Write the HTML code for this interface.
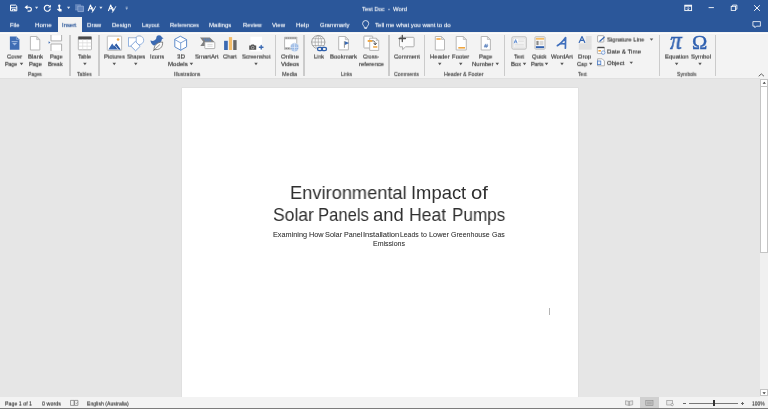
<!DOCTYPE html>
<html><head><meta charset="utf-8"><title>Test Doc - Word</title>
<style>
html,body{margin:0;padding:0;}
body{width:768px;height:409px;overflow:hidden;position:relative;background:#e6e6e6;font-family:"Liberation Sans",sans-serif;}
.abs{position:absolute;}
.t{position:absolute;white-space:nowrap;line-height:1;transform-origin:0 0;text-shadow:0 0.4px 0.5px currentColor;will-change:transform;}
.sep{position:absolute;width:1.3px;background:#cbcbcb;top:34.6px;height:41.2px;}
.arr{position:absolute;width:0;height:0;border-left:1.7px solid transparent;border-right:1.7px solid transparent;border-top:2px solid #5a5a5a;}
svg{position:absolute;overflow:visible;}
</style></head><body>

<div class="abs" style="left:0;top:0;width:768px;height:32.45px;background:#2b579a;"></div>
<div class="abs" style="left:0;top:32.45px;width:768px;height:45.4px;background:#f3f3f3;"></div>
<div class="abs" style="left:0;top:77.5px;width:768px;height:0.6px;background:#e0e0e0;"></div>
<div class="abs" style="left:0;top:32.9px;width:57px;height:1px;background:#fbfbfb;"></div>
<div class="abs" style="left:82.4px;top:32.9px;width:686px;height:1px;background:#fbfbfb;"></div>
<div class="abs" style="left:57.75px;top:17.3px;width:24.25px;height:16px;background:#f3f3f3;"></div>
<div class="t" style="left:361.77px;top:7.00px;font-size:5.9px;color:rgba(255,255,255,0.86);text-shadow:0 1px 0 rgba(255,255,255,0.25),0 -1px 0 rgba(255,255,255,0.25),0 0 0.5px rgba(255,255,255,0.25);transform:scaleX(0.9794);">Test Doc</div>
<div class="t" style="left:387.95px;top:7.00px;font-size:5.9px;color:rgba(255,255,255,0.86);text-shadow:0 1px 0 rgba(255,255,255,0.25),0 -1px 0 rgba(255,255,255,0.25),0 0 0.5px rgba(255,255,255,0.25);transform:scaleX(0.9685);">-</div>
<div class="t" style="left:393.38px;top:7.00px;font-size:5.9px;color:rgba(255,255,255,0.86);text-shadow:0 1px 0 rgba(255,255,255,0.25),0 -1px 0 rgba(255,255,255,0.25),0 0 0.5px rgba(255,255,255,0.25);transform:scaleX(1.0083);">Word</div>
<div class="t" style="left:9.61px;top:23.00px;font-size:5.9px;color:rgba(255,255,255,0.86);text-shadow:0 1px 0 rgba(255,255,255,0.25),0 -1px 0 rgba(255,255,255,0.25),0 0 0.5px rgba(255,255,255,0.25);transform:scaleX(1.0044);">File</div>
<div class="t" style="left:34.88px;top:23.00px;font-size:5.9px;color:rgba(255,255,255,0.86);text-shadow:0 1px 0 rgba(255,255,255,0.25),0 -1px 0 rgba(255,255,255,0.25),0 0 0.5px rgba(255,255,255,0.25);transform:scaleX(1.0672);">Home</div>
<div class="t" style="left:62.27px;top:23.00px;font-size:5.9px;color:rgba(43,87,154,0.86);text-shadow:0 1px 0 rgba(43,87,154,0.25),0 -1px 0 rgba(43,87,154,0.25),0 0 0.5px rgba(43,87,154,0.6);transform:scaleX(0.9738);">Insert</div>
<div class="t" style="left:87.10px;top:23.00px;font-size:5.9px;color:rgba(255,255,255,0.86);text-shadow:0 1px 0 rgba(255,255,255,0.25),0 -1px 0 rgba(255,255,255,0.25),0 0 0.5px rgba(255,255,255,0.25);transform:scaleX(1.0377);">Draw</div>
<div class="t" style="left:112.10px;top:23.00px;font-size:5.9px;color:rgba(255,255,255,0.86);text-shadow:0 1px 0 rgba(255,255,255,0.25),0 -1px 0 rgba(255,255,255,0.25),0 0 0.5px rgba(255,255,255,0.25);transform:scaleX(1.0283);">Design</div>
<div class="t" style="left:141.63px;top:23.00px;font-size:5.9px;color:rgba(255,255,255,0.86);text-shadow:0 1px 0 rgba(255,255,255,0.25),0 -1px 0 rgba(255,255,255,0.25),0 0 0.5px rgba(255,255,255,0.25);transform:scaleX(0.9772);">Layout</div>
<div class="t" style="left:169.94px;top:23.00px;font-size:5.9px;color:rgba(255,255,255,0.86);text-shadow:0 1px 0 rgba(255,255,255,0.25),0 -1px 0 rgba(255,255,255,0.25),0 0 0.5px rgba(255,255,255,0.25);transform:scaleX(0.9567);">References</div>
<div class="t" style="left:209.40px;top:23.00px;font-size:5.9px;color:rgba(255,255,255,0.86);text-shadow:0 1px 0 rgba(255,255,255,0.25),0 -1px 0 rgba(255,255,255,0.25),0 0 0.5px rgba(255,255,255,0.25);transform:scaleX(1.0360);">Mailings</div>
<div class="t" style="left:242.63px;top:23.00px;font-size:5.9px;color:rgba(255,255,255,0.86);text-shadow:0 1px 0 rgba(255,255,255,0.25),0 -1px 0 rgba(255,255,255,0.25),0 0 0.5px rgba(255,255,255,0.25);transform:scaleX(0.9693);">Review</div>
<div class="t" style="left:272.28px;top:23.00px;font-size:5.9px;color:rgba(255,255,255,0.86);text-shadow:0 1px 0 rgba(255,255,255,0.25),0 -1px 0 rgba(255,255,255,0.25),0 0 0.5px rgba(255,255,255,0.25);transform:scaleX(1.0337);">View</div>
<div class="t" style="left:295.88px;top:23.00px;font-size:5.9px;color:rgba(255,255,255,0.86);text-shadow:0 1px 0 rgba(255,255,255,0.25),0 -1px 0 rgba(255,255,255,0.25),0 0 0.5px rgba(255,255,255,0.25);transform:scaleX(1.0692);">Help</div>
<div class="t" style="left:319.60px;top:23.00px;font-size:5.9px;color:rgba(255,255,255,0.86);text-shadow:0 1px 0 rgba(255,255,255,0.25),0 -1px 0 rgba(255,255,255,0.25),0 0 0.5px rgba(255,255,255,0.25);transform:scaleX(1.0117);">Grammarly</div>
<div class="t" style="left:375.26px;top:23.00px;font-size:5.9px;color:rgba(255,255,255,0.86);text-shadow:0 1px 0 rgba(255,255,255,0.25),0 -1px 0 rgba(255,255,255,0.25),0 0 0.5px rgba(255,255,255,0.25);transform:scaleX(1.0423);">Tell me what you want to do</div>
<div class="t" style="left:6.82px;top:53.00px;font-size:6.0px;color:rgba(68,68,68,0.85);text-shadow:0 1px 0 rgba(68,68,68,0.85);transform:scaleX(0.9484);">Cover</div>
<div class="t" style="left:5.18px;top:61.00px;font-size:6.0px;color:rgba(68,68,68,0.86);text-shadow:0 1px 0 rgba(68,68,68,0.25),0 -1px 0 rgba(68,68,68,0.25),0 0 0.5px rgba(68,68,68,0.6);transform:scaleX(0.8526);">Page</div>
<div class="t" style="left:27.82px;top:53.00px;font-size:6.0px;color:rgba(68,68,68,0.85);text-shadow:0 1px 0 rgba(68,68,68,0.85);transform:scaleX(0.9707);">Blank</div>
<div class="t" style="left:28.65px;top:61.00px;font-size:6.0px;color:rgba(68,68,68,0.86);text-shadow:0 1px 0 rgba(68,68,68,0.25),0 -1px 0 rgba(68,68,68,0.25),0 0 0.5px rgba(68,68,68,0.6);transform:scaleX(0.9054);">Page</div>
<div class="t" style="left:49.66px;top:53.00px;font-size:6.0px;color:rgba(68,68,68,0.85);text-shadow:0 1px 0 rgba(68,68,68,0.85);transform:scaleX(0.8903);">Page</div>
<div class="t" style="left:48.44px;top:61.00px;font-size:6.0px;color:rgba(68,68,68,0.86);text-shadow:0 1px 0 rgba(68,68,68,0.25),0 -1px 0 rgba(68,68,68,0.25),0 0 0.5px rgba(68,68,68,0.6);transform:scaleX(0.9347);">Break</div>
<div class="t" style="left:78.28px;top:53.00px;font-size:6.0px;color:rgba(68,68,68,0.85);text-shadow:0 1px 0 rgba(68,68,68,0.85);transform:scaleX(0.9108);">Table</div>
<div class="t" style="left:103.62px;top:53.00px;font-size:6.0px;color:rgba(68,68,68,0.85);text-shadow:0 1px 0 rgba(68,68,68,0.85);transform:scaleX(0.9683);">Pictures</div>
<div class="t" style="left:126.86px;top:53.00px;font-size:6.0px;color:rgba(68,68,68,0.85);text-shadow:0 1px 0 rgba(68,68,68,0.85);transform:scaleX(0.8960);">Shapes</div>
<div class="t" style="left:149.86px;top:53.00px;font-size:6.0px;color:rgba(68,68,68,0.85);text-shadow:0 1px 0 rgba(68,68,68,0.85);transform:scaleX(0.9726);">Icons</div>
<div class="t" style="left:176.86px;top:53.00px;font-size:6.0px;color:rgba(68,68,68,0.85);text-shadow:0 1px 0 rgba(68,68,68,0.85);transform:scaleX(1.0478);">3D</div>
<div class="t" style="left:167.90px;top:61.00px;font-size:6.0px;color:rgba(68,68,68,0.86);text-shadow:0 1px 0 rgba(68,68,68,0.25),0 -1px 0 rgba(68,68,68,0.25),0 0 0.5px rgba(68,68,68,0.6);transform:scaleX(1.0195);">Models</div>
<div class="t" style="left:195.33px;top:53.00px;font-size:6.0px;color:rgba(68,68,68,0.85);text-shadow:0 1px 0 rgba(68,68,68,0.85);transform:scaleX(0.9975);">SmartArt</div>
<div class="t" style="left:223.12px;top:53.00px;font-size:6.0px;color:rgba(68,68,68,0.85);text-shadow:0 1px 0 rgba(68,68,68,0.85);transform:scaleX(0.9418);">Chart</div>
<div class="t" style="left:241.85px;top:53.00px;font-size:6.0px;color:rgba(68,68,68,0.85);text-shadow:0 1px 0 rgba(68,68,68,0.85);transform:scaleX(0.9420);">Screenshot</div>
<div class="t" style="left:280.81px;top:53.00px;font-size:6.0px;color:rgba(68,68,68,0.85);text-shadow:0 1px 0 rgba(68,68,68,0.85);transform:scaleX(1.0301);">Online</div>
<div class="t" style="left:281.08px;top:61.00px;font-size:6.0px;color:rgba(68,68,68,0.86);text-shadow:0 1px 0 rgba(68,68,68,0.25),0 -1px 0 rgba(68,68,68,0.25),0 0 0.5px rgba(68,68,68,0.6);transform:scaleX(0.9889);">Videos</div>
<div class="t" style="left:313.66px;top:53.00px;font-size:6.0px;color:rgba(68,68,68,0.85);text-shadow:0 1px 0 rgba(68,68,68,0.85);transform:scaleX(0.9027);">Link</div>
<div class="t" style="left:329.91px;top:53.00px;font-size:6.0px;color:rgba(68,68,68,0.85);text-shadow:0 1px 0 rgba(68,68,68,0.85);transform:scaleX(0.9875);">Bookmark</div>
<div class="t" style="left:363.33px;top:53.00px;font-size:6.0px;color:rgba(68,68,68,0.85);text-shadow:0 1px 0 rgba(68,68,68,0.85);transform:scaleX(0.9064);">Cross-</div>
<div class="t" style="left:359.01px;top:61.00px;font-size:6.0px;color:rgba(68,68,68,0.86);text-shadow:0 1px 0 rgba(68,68,68,0.25),0 -1px 0 rgba(68,68,68,0.25),0 0 0.5px rgba(68,68,68,0.6);transform:scaleX(0.9804);">reference</div>
<div class="t" style="left:393.80px;top:53.00px;font-size:6.0px;color:rgba(68,68,68,0.85);text-shadow:0 1px 0 rgba(68,68,68,0.85);transform:scaleX(0.9857);">Comment</div>
<div class="t" style="left:429.61px;top:53.00px;font-size:6.0px;color:rgba(68,68,68,0.85);text-shadow:0 1px 0 rgba(68,68,68,0.85);transform:scaleX(0.9952);">Header</div>
<div class="t" style="left:451.91px;top:53.00px;font-size:6.0px;color:rgba(68,68,68,0.85);text-shadow:0 1px 0 rgba(68,68,68,0.85);transform:scaleX(0.9969);">Footer</div>
<div class="t" style="left:479.14px;top:53.00px;font-size:6.0px;color:rgba(68,68,68,0.85);text-shadow:0 1px 0 rgba(68,68,68,0.85);transform:scaleX(0.9431);">Page</div>
<div class="t" style="left:472.11px;top:61.00px;font-size:6.0px;color:rgba(68,68,68,0.86);text-shadow:0 1px 0 rgba(68,68,68,0.25),0 -1px 0 rgba(68,68,68,0.25),0 0 0.5px rgba(68,68,68,0.6);transform:scaleX(1.0022);">Number</div>
<div class="t" style="left:513.78px;top:53.00px;font-size:6.0px;color:rgba(68,68,68,0.85);text-shadow:0 1px 0 rgba(68,68,68,0.85);transform:scaleX(0.9234);">Text</div>
<div class="t" style="left:510.92px;top:61.00px;font-size:6.0px;color:rgba(68,68,68,0.86);text-shadow:0 1px 0 rgba(68,68,68,0.25),0 -1px 0 rgba(68,68,68,0.25),0 0 0.5px rgba(68,68,68,0.6);transform:scaleX(0.9708);">Box</div>
<div class="t" style="left:532.33px;top:53.00px;font-size:6.0px;color:rgba(68,68,68,0.85);text-shadow:0 1px 0 rgba(68,68,68,0.85);transform:scaleX(0.9492);">Quick</div>
<div class="t" style="left:530.66px;top:61.00px;font-size:6.0px;color:rgba(68,68,68,0.86);text-shadow:0 1px 0 rgba(68,68,68,0.25),0 -1px 0 rgba(68,68,68,0.25),0 0 0.5px rgba(68,68,68,0.6);transform:scaleX(0.8875);">Parts</div>
<div class="t" style="left:551.08px;top:53.00px;font-size:6.0px;color:rgba(68,68,68,0.85);text-shadow:0 1px 0 rgba(68,68,68,0.85);transform:scaleX(0.9987);">WordArt</div>
<div class="t" style="left:578.40px;top:53.00px;font-size:6.0px;color:rgba(68,68,68,0.85);text-shadow:0 1px 0 rgba(68,68,68,0.85);transform:scaleX(1.0192);">Drop</div>
<div class="t" style="left:577.12px;top:61.00px;font-size:6.0px;color:rgba(68,68,68,0.86);text-shadow:0 1px 0 rgba(68,68,68,0.25),0 -1px 0 rgba(68,68,68,0.25),0 0 0.5px rgba(68,68,68,0.6);transform:scaleX(0.9275);">Cap</div>
<div class="t" style="left:664.61px;top:53.00px;font-size:6.0px;color:rgba(68,68,68,0.85);text-shadow:0 1px 0 rgba(68,68,68,0.85);transform:scaleX(0.9995);">Equation</div>
<div class="t" style="left:690.63px;top:53.00px;font-size:6.0px;color:rgba(68,68,68,0.85);text-shadow:0 1px 0 rgba(68,68,68,0.85);transform:scaleX(0.9929);">Symbol</div>
<div class="t" style="left:606.84px;top:36.00px;font-size:6.0px;color:rgba(68,68,68,0.85);text-shadow:0 1px 0 rgba(68,68,68,0.85);transform:scaleX(0.9644);">Signature Line</div>
<div class="t" style="left:606.59px;top:48.00px;font-size:6.0px;color:rgba(68,68,68,0.85);text-shadow:0 1px 0 rgba(68,68,68,0.85);transform:scaleX(1.0324);">Date &amp; Time</div>
<div class="t" style="left:606.82px;top:60.00px;font-size:6.0px;color:rgba(68,68,68,0.86);text-shadow:0 1px 0 rgba(68,68,68,0.25),0 -1px 0 rgba(68,68,68,0.25),0 0 0.5px rgba(68,68,68,0.6);transform:scaleX(0.9991);">Object</div>
<svg style="left:0;top:0" width="768" height="409" viewBox="0 0 768 409">
<path d="M19.75 62.75H23.25L21.50 65.15Z" fill="#585858"/>
<path d="M83.15 62.75H86.65L84.90 65.15Z" fill="#585858"/>
<path d="M112.50 62.75H116.00L114.25 65.15Z" fill="#585858"/>
<path d="M134.00 62.75H137.50L135.75 65.15Z" fill="#585858"/>
<path d="M189.65 62.75H193.15L191.40 65.15Z" fill="#585858"/>
<path d="M254.25 62.75H257.75L256.00 65.15Z" fill="#585858"/>
<path d="M438.00 62.75H441.50L439.75 65.15Z" fill="#585858"/>
<path d="M459.00 62.75H462.50L460.75 65.15Z" fill="#585858"/>
<path d="M495.50 62.75H499.00L497.25 65.15Z" fill="#585858"/>
<path d="M522.75 62.75H526.25L524.50 65.15Z" fill="#585858"/>
<path d="M544.75 62.75H548.25L546.50 65.15Z" fill="#585858"/>
<path d="M560.25 62.75H563.75L562.00 65.15Z" fill="#585858"/>
<path d="M589.00 62.75H592.50L590.75 65.15Z" fill="#585858"/>
<path d="M674.85 62.75H678.35L676.60 65.15Z" fill="#585858"/>
<path d="M698.25 62.75H701.75L700.00 65.15Z" fill="#585858"/>
<path d="M649.75 38.45H653.25L651.50 40.85Z" fill="#585858"/>
<path d="M629.50 61.65H633.00L631.25 64.05Z" fill="#585858"/>
</svg>
<div class="sep" style="left:69.35px;"></div>
<div class="sep" style="left:98.35px;"></div>
<div class="sep" style="left:274.85px;"></div>
<div class="sep" style="left:303.35px;"></div>
<div class="sep" style="left:388.35px;"></div>
<div class="sep" style="left:423.95px;"></div>
<div class="sep" style="left:503.75px;"></div>
<div class="sep" style="left:658.85px;"></div>
<div class="sep" style="left:714.55px;"></div>
<div class="t" style="left:27.70px;top:72.00px;font-size:5.2px;color:rgba(85,85,85,0.86);text-shadow:0 1px 0 rgba(85,85,85,0.25),0 -1px 0 rgba(85,85,85,0.25),0 0 0.5px rgba(85,85,85,0.6);transform:scaleX(0.9414);">Pages</div>
<div class="t" style="left:77.49px;top:72.00px;font-size:5.2px;color:rgba(85,85,85,0.86);text-shadow:0 1px 0 rgba(85,85,85,0.25),0 -1px 0 rgba(85,85,85,0.25),0 0 0.5px rgba(85,85,85,0.6);transform:scaleX(0.9707);">Tables</div>
<div class="t" style="left:174.12px;top:72.00px;font-size:5.2px;color:rgba(85,85,85,0.86);text-shadow:0 1px 0 rgba(85,85,85,0.25),0 -1px 0 rgba(85,85,85,0.25),0 0 0.5px rgba(85,85,85,0.6);transform:scaleX(1.0064);">Illustrations</div>
<div class="t" style="left:281.94px;top:72.00px;font-size:5.2px;color:rgba(85,85,85,0.86);text-shadow:0 1px 0 rgba(85,85,85,0.25),0 -1px 0 rgba(85,85,85,0.25),0 0 0.5px rgba(85,85,85,0.6);transform:scaleX(1.0696);">Media</div>
<div class="t" style="left:340.71px;top:72.00px;font-size:5.2px;color:rgba(85,85,85,0.86);text-shadow:0 1px 0 rgba(85,85,85,0.25),0 -1px 0 rgba(85,85,85,0.25),0 0 0.5px rgba(85,85,85,0.6);transform:scaleX(0.9112);">Links</div>
<div class="t" style="left:394.14px;top:72.00px;font-size:5.2px;color:rgba(85,85,85,0.86);text-shadow:0 1px 0 rgba(85,85,85,0.25),0 -1px 0 rgba(85,85,85,0.25),0 0 0.5px rgba(85,85,85,0.6);transform:scaleX(0.9921);">Comments</div>
<div class="t" style="left:444.46px;top:72.00px;font-size:5.2px;color:rgba(85,85,85,0.86);text-shadow:0 1px 0 rgba(85,85,85,0.25),0 -1px 0 rgba(85,85,85,0.25),0 0 0.5px rgba(85,85,85,0.6);transform:scaleX(1.0334);">Header &amp; Footer</div>
<div class="t" style="left:577.79px;top:72.00px;font-size:5.2px;color:rgba(85,85,85,0.86);text-shadow:0 1px 0 rgba(85,85,85,0.25),0 -1px 0 rgba(85,85,85,0.25),0 0 0.5px rgba(85,85,85,0.6);transform:scaleX(0.9269);">Text</div>
<div class="t" style="left:677.37px;top:72.00px;font-size:5.2px;color:rgba(85,85,85,0.86);text-shadow:0 1px 0 rgba(85,85,85,0.25),0 -1px 0 rgba(85,85,85,0.25),0 0 0.5px rgba(85,85,85,0.6);transform:scaleX(0.9733);">Symbols</div>
<div class="t" style="left:670.48px;top:28.00px;font-size:25.0px;color:#2f60b0;text-shadow:none;transform:scaleX(0.9403);font-family:'Liberation Serif',serif;font-style:italic;-webkit-text-stroke:0.55px #2f60b0;">π</div>
<div class="t" style="left:692.05px;top:33.00px;font-size:19.8px;color:#2f60b0;text-shadow:none;transform:scaleX(1.0400);font-family:'Liberation Serif',serif;-webkit-text-stroke:0.4px #2f60b0;">Ω</div>
<div class="abs" style="left:181.8px;top:87.7px;width:396.3px;height:309.6px;background:#fff;box-shadow:0 0 0 0.5px #dadada;"></div>
<div class="t" style="left:290.40px;top:184.00px;font-size:18.4px;color:#303030;text-shadow:none;transform:scaleX(0.9923);">Environmental</div>
<div class="t" style="left:411.21px;top:184.00px;font-size:18.4px;color:#303030;text-shadow:none;transform:scaleX(0.9963);">Impact</div>
<div class="t" style="left:471.15px;top:184.00px;font-size:18.4px;color:#303030;text-shadow:none;transform:scaleX(1.1020);">of</div>
<div class="t" style="left:272.51px;top:206.00px;font-size:18.4px;color:#303030;text-shadow:none;transform:scaleX(0.9540);">Solar</div>
<div class="t" style="left:318.04px;top:206.00px;font-size:18.4px;color:#303030;text-shadow:none;transform:scaleX(0.9039);">Panels</div>
<div class="t" style="left:373.43px;top:206.00px;font-size:18.4px;color:#303030;text-shadow:none;transform:scaleX(0.9986);">and</div>
<div class="t" style="left:408.76px;top:206.00px;font-size:18.4px;color:#303030;text-shadow:none;transform:scaleX(0.9564);">Heat</div>
<div class="t" style="left:451.79px;top:206.00px;font-size:18.4px;color:#303030;text-shadow:none;transform:scaleX(0.9312);">Pumps</div>
<div class="t" style="left:273.40px;top:232.00px;font-size:6.6px;color:rgba(51,51,51,0.85);text-shadow:0 1px 0 rgba(51,51,51,0.85);transform:scaleX(1.1055);text-shadow:0 0 0.5px rgba(51,51,51,0.5);">Examining</div>
<div class="t" style="left:308.50px;top:232.00px;font-size:6.6px;color:rgba(51,51,51,0.85);text-shadow:0 1px 0 rgba(51,51,51,0.85);transform:scaleX(1.1042);text-shadow:0 0 0.5px rgba(51,51,51,0.5);">How</div>
<div class="t" style="left:324.87px;top:232.00px;font-size:6.6px;color:rgba(51,51,51,0.85);text-shadow:0 1px 0 rgba(51,51,51,0.85);transform:scaleX(1.1132);text-shadow:0 0 0.5px rgba(51,51,51,0.5);">Solar</div>
<div class="t" style="left:343.61px;top:232.00px;font-size:6.6px;color:rgba(51,51,51,0.85);text-shadow:0 1px 0 rgba(51,51,51,0.85);transform:scaleX(1.0818);text-shadow:0 0 0.5px rgba(51,51,51,0.5);">Panel</div>
<div class="t" style="left:362.70px;top:232.00px;font-size:6.6px;color:rgba(51,51,51,0.85);text-shadow:0 1px 0 rgba(51,51,51,0.85);transform:scaleX(1.1499);text-shadow:0 0 0.5px rgba(51,51,51,0.5);">Installation</div>
<div class="t" style="left:400.34px;top:232.00px;font-size:6.6px;color:rgba(51,51,51,0.85);text-shadow:0 1px 0 rgba(51,51,51,0.85);transform:scaleX(1.0345);text-shadow:0 0 0.5px rgba(51,51,51,0.5);">Leads</div>
<div class="t" style="left:421.40px;top:232.00px;font-size:6.6px;color:rgba(51,51,51,0.85);text-shadow:0 1px 0 rgba(51,51,51,0.85);transform:scaleX(1.0516);text-shadow:0 0 0.5px rgba(51,51,51,0.5);">to</div>
<div class="t" style="left:429.20px;top:232.00px;font-size:6.6px;color:rgba(51,51,51,0.85);text-shadow:0 1px 0 rgba(51,51,51,0.85);transform:scaleX(1.1136);text-shadow:0 0 0.5px rgba(51,51,51,0.5);">Lower</div>
<div class="t" style="left:451.35px;top:232.00px;font-size:6.6px;color:rgba(51,51,51,0.85);text-shadow:0 1px 0 rgba(51,51,51,0.85);transform:scaleX(1.0642);text-shadow:0 0 0.5px rgba(51,51,51,0.5);">Greenhouse</div>
<div class="t" style="left:492.35px;top:232.00px;font-size:6.6px;color:rgba(51,51,51,0.85);text-shadow:0 1px 0 rgba(51,51,51,0.85);transform:scaleX(1.0488);text-shadow:0 0 0.5px rgba(51,51,51,0.5);">Gas</div>
<div class="t" style="left:372.92px;top:241.00px;font-size:6.6px;color:rgba(51,51,51,0.86);text-shadow:0 1px 0 rgba(51,51,51,0.25),0 -1px 0 rgba(51,51,51,0.25),0 0 0.5px rgba(51,51,51,0.6);transform:scaleX(1.0649);text-shadow:0 0 0.5px rgba(51,51,51,0.5);">Emissions</div>
<div class="abs" style="left:549.2px;top:308.1px;width:0.8px;height:7px;background:#b4b4b4;"></div>
<div class="abs" style="left:760.2px;top:78px;width:7.8px;height:319px;background:#f0f0f0;"></div>
<div class="abs" style="left:760.1px;top:78.6px;width:7.6px;height:174.4px;background:#fff;border:0.7px solid #c4c4c4;box-sizing:border-box;"></div>
<div class="abs" style="left:760.1px;top:86.3px;width:7.6px;height:0.7px;background:#c4c4c4;"></div>
<div class="abs" style="left:760.1px;top:389.1px;width:7.6px;height:7.4px;background:#fff;border:0.7px solid #c4c4c4;box-sizing:border-box;"></div>
<div class="abs" style="left:0;top:397.3px;width:768px;height:12px;background:#f3f3f3;"></div>
<div class="abs" style="left:639.8px;top:397.3px;width:19.1px;height:10.5px;background:#d0d0d0;"></div>
<div class="abs" style="left:0;top:407.65px;width:768px;height:1.35px;background:#7c7c7c;"></div>
<div class="t" style="left:5.27px;top:402.00px;font-size:4.9px;color:rgba(68,68,68,0.85);text-shadow:0 1px 0 rgba(68,68,68,0.85);transform:scaleX(1.0808);">Page 1 of 1</div>
<div class="t" style="left:42.29px;top:402.00px;font-size:4.9px;color:rgba(68,68,68,0.85);text-shadow:0 1px 0 rgba(68,68,68,0.85);transform:scaleX(1.1020);">0 words</div>
<div class="t" style="left:86.68px;top:402.00px;font-size:4.9px;color:rgba(68,68,68,0.85);text-shadow:0 1px 0 rgba(68,68,68,0.85);transform:scaleX(1.0499);">English (Australia)</div>
<div class="t" style="left:752.04px;top:402.00px;font-size:4.9px;color:rgba(68,68,68,0.85);text-shadow:0 1px 0 rgba(68,68,68,0.85);transform:scaleX(0.9762);">100%</div>
<div class="abs" style="left:688.9px;top:402.8px;width:49.5px;height:0.8px;background:#777;"></div>
<div class="abs" style="left:712.6px;top:400.2px;width:2.4px;height:5.7px;background:#333;"></div>
<div class="abs" style="left:682.6px;top:402.8px;width:3.2px;height:0.8px;background:#666;"></div>
<div class="abs" style="left:741.2px;top:402.8px;width:3px;height:0.8px;background:#666;"></div>
<div class="abs" style="left:742.3px;top:401.7px;width:0.8px;height:3px;background:#666;"></div>
<svg style="left:0;top:0" width="768" height="409" viewBox="0 0 768 409">
<path d="M10.9 5.1H15.7L16.8 6.2V10.8H10.9Z" fill="none" stroke="#ffffff" stroke-width="1.0" stroke-linejoin="round" stroke-linecap="round" />
<line x1="10.9" y1="7.8" x2="16.8" y2="7.8" stroke="#ffffff" stroke-width="1.0" stroke-linecap="butt"/>
<rect x="12.2" y="9.0" width="3.40" height="1.80" fill="#ffffff" stroke="none" stroke-width="0.9" rx="0" opacity="1"/>
<rect x="13.3" y="9.6" width="0.80" height="1.20" fill="#2b579a" stroke="none" stroke-width="0.9" rx="0" opacity="1"/>
<path d="M26.6 7.2H29.4A1.95 1.95 0 0 1 29.4 11.1H28.0" fill="none" stroke="#ffffff" stroke-width="1.15" stroke-linejoin="round" stroke-linecap="round" />
<path d="M24.5 7.2L27.5 4.9V9.5Z" fill="#ffffff" stroke="none" stroke-width="0.9" stroke-linejoin="round" stroke-linecap="round" />
<path d="M35.0 6.800000000000001H38.2L36.6 9.1Z" fill="#ffffff" opacity="0.85"/>
<path d="M49.2 5.9A3 3 0 1 0 50.2 9.0" fill="none" stroke="#ffffff" stroke-width="1.15" stroke-linejoin="round" stroke-linecap="round" />
<path d="M48.0 7.5H50.9V4.7Z" fill="#ffffff" stroke="none" stroke-width="0.9" stroke-linejoin="round" stroke-linecap="round" />
<circle cx="59.3" cy="5.8" r="1.2" fill="#ffffff" stroke="none" stroke-width="0.9"/>
<path d="M58.7 6.5V9.2L57.4 8.8L57.1 9.6L59.4 11.6H61.6V9.2L59.9 8.6V6.5Z" fill="#ffffff" stroke="none" stroke-width="0.9" stroke-linejoin="round" stroke-linecap="round" />
<path d="M67.0 6.800000000000001H70.19999999999999L68.6 9.1Z" fill="#ffffff" opacity="0.85"/>
<path d="M75.6 4.7H80.6V6.2H83.4V11.6H78.2V10H75.6Z" fill="#6f8fc4" stroke="#9fb6dc" stroke-width="0.5" stroke-linejoin="round" stroke-linecap="round" opacity="0.8"/>
<path d="M78.2 6.2H83.4V11.6H78.2Z" fill="#5f82bb" stroke="#a9bee0" stroke-width="0.5" stroke-linejoin="round" stroke-linecap="round" />
<path d="M88.3 10.6L90.5 5.0L92.6 10.6M89.1 8.8H91.9" fill="none" stroke="#ffffff" stroke-width="1.1" stroke-linejoin="round" stroke-linecap="round" />
<path d="M92.2 7.4L93.6 10.2L95.5 6.6M93.6 10.2L92.2 12.3" fill="none" stroke="#ffffff" stroke-width="0.85" stroke-linejoin="round" stroke-linecap="round" />
<path d="M108.5 10.6L110.7 5.0L112.8 10.6M109.3 8.8H112.10000000000001" fill="none" stroke="#ffffff" stroke-width="1.1" stroke-linejoin="round" stroke-linecap="round" />
<path d="M112.4 7.4L113.8 10.2L115.7 6.6M113.8 10.2L112.4 12.3" fill="none" stroke="#ffffff" stroke-width="0.85" stroke-linejoin="round" stroke-linecap="round" />
<path d="M99.30000000000001 6.800000000000001H102.5L100.9 9.1Z" fill="#ffffff" opacity="0.85"/>
<line x1="125.6" y1="7.2" x2="127.8" y2="7.2" stroke="#ffffff" stroke-width="0.5" stroke-linecap="butt"/>
<path d="M125.5 8.15H127.9L126.7 9.65Z" fill="#ffffff" opacity="0.7"/>
<rect x="684.8" y="5.2" width="6.80" height="5.40" fill="none" stroke="#ffffff" stroke-width="0.9" rx="0" opacity="1"/>
<rect x="684.8" y="5.2" width="6.80" height="1.40" fill="#ffffff" stroke="none" stroke-width="0.9" rx="0" opacity="1"/>
<path d="M688.2 7.4V9.8M687.1 8.7L688.2 9.8L689.3 8.7" fill="none" stroke="#ffffff" stroke-width="0.6" stroke-linejoin="round" stroke-linecap="round" />
<line x1="708.6" y1="7.6" x2="713.9" y2="7.6" stroke="#ffffff" stroke-width="0.9" stroke-linecap="butt"/>
<rect x="731.2" y="6.3" width="4.40" height="4.10" fill="none" stroke="#ffffff" stroke-width="0.8" rx="0" opacity="1"/>
<path d="M732.6 6.3V5.1H736.9V9.2H735.6" fill="none" stroke="#ffffff" stroke-width="0.8" stroke-linejoin="round" stroke-linecap="round" />
<path d="M754.4 5.5L759.6 10.6M759.6 5.5L754.4 10.6" fill="none" stroke="#ffffff" stroke-width="0.95" stroke-linejoin="round" stroke-linecap="round" />
<path d="M753.3 21.6H760.4V26.2H756.4L754.9 27.7V26.2H753.3Z" fill="none" stroke="#ffffff" stroke-width="0.8" stroke-linejoin="round" stroke-linecap="round" />
<path d="M364.4 27.3C364.4 26 362.6 25.4 362.6 23.6A3.05 3.05 0 0 1 368.7 23.6C368.7 25.4 366.9 26 366.9 27.3Z" fill="none" stroke="#ffffff" stroke-width="0.8" stroke-linejoin="round" stroke-linecap="round" />
<line x1="364.5" y1="28.5" x2="366.8" y2="28.5" stroke="#ffffff" stroke-width="0.7" stroke-linecap="butt"/>
<path d="M9.9 36.4H16.4L19.4 39.4V49.8H9.9Z" fill="#3f6db4" stroke="none" stroke-width="0.9" stroke-linejoin="round" stroke-linecap="round" />
<path d="M16.4 36.4V39.4H19.4" fill="none" stroke="#9db8e2" stroke-width="0.6" stroke-linejoin="round" stroke-linecap="round" />
<rect x="11.6" y="41.3" width="6.00" height="0.80" fill="#b9cdea" stroke="none" stroke-width="0.9" rx="0" opacity="1"/>
<path d="M12.2 43.1H17L14.6 45.6Z" fill="#9db8e2" stroke="none" stroke-width="0.9" stroke-linejoin="round" stroke-linecap="round" />
<path d="M30.4 36.5H36.699999999999996L39.8 39.6V50.0H30.4Z" fill="#ffffff" stroke="#b4b4b4" stroke-width="0.95" stroke-linejoin="round"/>
<path d="M36.699999999999996 36.5V39.6H39.8Z" fill="#e2e2e2" stroke="#b4b4b4" stroke-width="0.6649999999999999" stroke-linejoin="round"/>
<path d="M51.0 35.4V40.9H61.6V35.4" fill="#ffffff" stroke="#a8a8a8" stroke-width="0.9" stroke-linejoin="round" stroke-linecap="round" />
<path d="M51.0 50.6V44.0H61.6V50.6" fill="#ffffff" stroke="#a8a8a8" stroke-width="0.9" stroke-linejoin="round" stroke-linecap="round" />
<path d="M48.6 41.3L50.4 42.5L48.6 43.7Z" fill="#3a69b2" stroke="none" stroke-width="0.9" stroke-linejoin="round" stroke-linecap="round" />
<rect x="78.3" y="36.6" width="13.20" height="13.20" fill="#ffffff" stroke="#a8a8a8" stroke-width="0.8" rx="0.6" opacity="1"/>
<rect x="78.3" y="36.6" width="13.20" height="2.90" fill="#4a4a4a" stroke="none" stroke-width="0.9" rx="0" opacity="1"/>
<line x1="78.3" y1="42.8" x2="91.5" y2="42.8" stroke="#cfcfcf" stroke-width="0.6" stroke-linecap="butt"/>
<line x1="78.3" y1="46.2" x2="91.5" y2="46.2" stroke="#cfcfcf" stroke-width="0.6" stroke-linecap="butt"/>
<line x1="82.7" y1="39.5" x2="82.7" y2="49.8" stroke="#d6d6d6" stroke-width="0.6" stroke-linecap="butt"/>
<line x1="87.1" y1="39.5" x2="87.1" y2="49.8" stroke="#d6d6d6" stroke-width="0.6" stroke-linecap="butt"/>
<rect x="107.3" y="36.1" width="14.30" height="14.30" fill="#ffffff" stroke="#b4b4b4" stroke-width="0.85" rx="0.5" opacity="1"/>
<circle cx="118.1" cy="39.5" r="1.3" fill="#f0a640" stroke="none" stroke-width="0.9"/>
<path d="M108.4 49.4L112.2 43.6L114.3 46.6L116.2 43.6L120.6 49.4Z" fill="#3a69b2" stroke="none" stroke-width="0.9" stroke-linejoin="round" stroke-linecap="round" />
<path d="M113.6 47.6L116.2 43.6L120.6 49.4H118.2Z" fill="#2d5aa3" stroke="none" stroke-width="0.9" stroke-linejoin="round" stroke-linecap="round" />
<path d="M115.4 46.0L118.4 49.9" fill="none" stroke="#ffffff" stroke-width="0.7" stroke-linejoin="round" stroke-linecap="round" />
<circle cx="139.3" cy="40.2" r="4.4" fill="#ffffff" stroke="#8eafde" stroke-width="0.9"/>
<path d="M136.0 37.3A4.4 4.4 0 0 1 141.8 36.6" fill="none" stroke="#c4c8d0" stroke-width="0.9" stroke-linejoin="round" stroke-linecap="round" />
<rect x="128.5" y="37.7" width="7.70" height="8.50" fill="#ffffff" stroke="#8badde" stroke-width="0.9" rx="0" opacity="1"/>
<line x1="129.6" y1="37.7" x2="135.0" y2="37.7" stroke="#c4c8d0" stroke-width="0.9" stroke-linecap="butt"/>
<path d="M135.6 41.7L140.2 46.25L135.6 50.8L131.0 46.25Z" fill="#ffffff" stroke="#7ca1d8" stroke-width="0.95" stroke-linejoin="round" stroke-linecap="round" />
<path d="M150.5 40.3C152 41.2 153.4 41 154.6 40.3C155.4 39.8 156 39.2 156.3 38.2C156.2 36.6 157.4 35.3 159 35.3C160.5 35.3 161.5 36.2 161.8 37.3L163.6 38.2L161.9 39.1C161.8 40.6 161 42 159.8 43C158.4 44.2 156.4 45.4 153.8 45.6C151.6 44.6 150.5 42.4 150.5 40.3Z" fill="#3a69b2" stroke="none" stroke-width="0.9" stroke-linejoin="round" stroke-linecap="round" />
<path d="M154.2 49.6C153.6 45.6 156.8 42.2 162.6 42C163 47.4 159.8 50.2 154.2 49.6Z" fill="#f8f8f8" stroke="#6d6d6d" stroke-width="0.8" stroke-linejoin="round" stroke-linecap="round" />
<path d="M153.2 50.8L159.6 44.8" fill="none" stroke="#6d6d6d" stroke-width="0.7" stroke-linejoin="round" stroke-linecap="round" />
<path d="M180.7 36.4L186.6 39.6V46.9L180.7 50.2L174.8 46.9V39.6Z" fill="#ffffff" stroke="#5f8ccb" stroke-width="1.0" stroke-linejoin="round" stroke-linecap="round" />
<path d="M174.8 39.6L180.7 42.9L186.6 39.6M180.7 42.9V50.2" fill="none" stroke="#6f97d0" stroke-width="0.9" stroke-linejoin="round" stroke-linecap="round" />
<path d="M200.0 37.4H209.8L214.2 41.7L209.8 46.0H200.3L203.3 41.7Z" fill="#808080" stroke="none" stroke-width="0.9" stroke-linejoin="round" stroke-linecap="round" />
<rect x="203.8" y="38.6" width="1.30" height="1.10" fill="#4f86d6" stroke="none" stroke-width="0.9" rx="0" opacity="1"/>
<rect x="206.0" y="38.6" width="1.30" height="1.10" fill="#4f86d6" stroke="none" stroke-width="0.9" rx="0" opacity="1"/>
<rect x="208.2" y="38.6" width="1.30" height="1.10" fill="#4f86d6" stroke="none" stroke-width="0.9" rx="0" opacity="1"/>
<rect x="205.2" y="40.3" width="1.30" height="1.10" fill="#4f86d6" stroke="none" stroke-width="0.9" rx="0" opacity="1"/>
<rect x="207.4" y="40.3" width="1.30" height="1.10" fill="#4f86d6" stroke="none" stroke-width="0.9" rx="0" opacity="1"/>
<rect x="209.6" y="40.3" width="1.30" height="1.10" fill="#4f86d6" stroke="none" stroke-width="0.9" rx="0" opacity="1"/>
<rect x="204.8" y="42.0" width="10.00" height="6.60" fill="#ffffff" stroke="#9c9c9c" stroke-width="0.75" rx="0.6" opacity="1"/>
<line x1="207.4" y1="44.4" x2="212.6" y2="44.4" stroke="#c9c9c9" stroke-width="0.7" stroke-linecap="butt"/>
<line x1="207.4" y1="46.2" x2="212.6" y2="46.2" stroke="#c9c9c9" stroke-width="0.7" stroke-linecap="butt"/>
<rect x="224.1" y="40.8" width="3.70" height="9.20" fill="#3a69b2" stroke="none" stroke-width="0.9" rx="0" opacity="1"/>
<rect x="228.9" y="37.1" width="3.20" height="12.90" fill="#f2bc6a" stroke="none" stroke-width="0.9" rx="0" opacity="1"/>
<rect x="233.2" y="40.1" width="3.40" height="9.90" fill="#666666" stroke="none" stroke-width="0.9" rx="0" opacity="1"/>
<rect x="250.4" y="36.7" width="11.60" height="14.70" fill="#ffffff" stroke="none" stroke-width="0.9" rx="0" opacity="1"/>
<path d="M249.2 45.5H250.8L251.6 44.5H253.9L254.7 45.5H256.2V49.8H249.2Z" fill="#555" stroke="none" stroke-width="0.9" stroke-linejoin="round" stroke-linecap="round" />
<circle cx="252.7" cy="47.6" r="1.3" fill="none" stroke="#ddd" stroke-width="0.6"/>
<path d="M261.2 45.4V49.0M259.4 47.2H263.0" fill="none" stroke="#3a69b2" stroke-width="1.35" stroke-linejoin="round" stroke-linecap="round" stroke-linecap="butt"/>
<rect x="284.0" y="36.7" width="13.30" height="13.10" fill="#bcbcbc" stroke="none" stroke-width="0.9" rx="0.6" opacity="1"/>
<rect x="285.1" y="39.3" width="11.10" height="7.90" fill="#ffffff" stroke="none" stroke-width="0.9" rx="0" opacity="1"/>
<rect x="285.6" y="37.5" width="1.30" height="1.10" fill="#868686" stroke="none" stroke-width="0.9" rx="0" opacity="1"/>
<rect x="287.85" y="37.5" width="1.30" height="1.10" fill="#868686" stroke="none" stroke-width="0.9" rx="0" opacity="1"/>
<rect x="290.1" y="37.5" width="1.30" height="1.10" fill="#868686" stroke="none" stroke-width="0.9" rx="0" opacity="1"/>
<rect x="292.35" y="37.5" width="1.30" height="1.10" fill="#868686" stroke="none" stroke-width="0.9" rx="0" opacity="1"/>
<rect x="294.6" y="37.5" width="1.30" height="1.10" fill="#868686" stroke="none" stroke-width="0.9" rx="0" opacity="1"/>
<rect x="285.6" y="47.9" width="1.30" height="1.10" fill="#868686" stroke="none" stroke-width="0.9" rx="0" opacity="1"/>
<rect x="287.85" y="47.9" width="1.30" height="1.10" fill="#868686" stroke="none" stroke-width="0.9" rx="0" opacity="1"/>
<rect x="290.1" y="47.9" width="1.30" height="1.10" fill="#868686" stroke="none" stroke-width="0.9" rx="0" opacity="1"/>
<circle cx="294.6" cy="47.3" r="4.2" fill="#8fb1e0" stroke="#f3f3f3" stroke-width="0.5"/>
<path d="M290.4 47.3H298.8M294.6 43.1V51.5" fill="none" stroke="#e6eefa" stroke-width="0.8" stroke-linejoin="round" stroke-linecap="round" />
<path d="M291.4 45.0H297.8M291.4 49.6H297.8" fill="none" stroke="#c9daf2" stroke-width="0.5" stroke-linejoin="round" stroke-linecap="round" />
<ellipse cx="294.6" cy="47.3" rx="2.0" ry="4.2" fill="none" stroke="#c9daf2" stroke-width="0.5"/>
<circle cx="318.3" cy="42.1" r="6.6" fill="#fafafa" stroke="#8e8e8e" stroke-width="0.85"/>
<path d="M311.7 42.1H324.9M318.3 35.5V48.7M312.8 38.7H323.8M312.8 45.5H323.8" fill="none" stroke="#9a9a9a" stroke-width="0.65" stroke-linejoin="round" stroke-linecap="round" />
<ellipse cx="318.3" cy="42.1" rx="3.2" ry="6.6" fill="none" stroke="#9a9a9a" stroke-width="0.65"/>
<rect x="316.4" y="46.2" width="11.00" height="5.50" fill="#f3f3f3" stroke="none" stroke-width="0.9" rx="2.6" opacity="1"/>
<rect x="317.5" y="47.4" width="5.10" height="3.20" fill="none" stroke="#2f60ad" stroke-width="1.35" rx="1.6" opacity="1"/>
<rect x="321.4" y="47.4" width="5.10" height="3.20" fill="none" stroke="#2f60ad" stroke-width="1.35" rx="1.6" opacity="1"/>
<path d="M338.7 36.5H345.29999999999995L348.4 39.6V49.9H338.7Z" fill="#ffffff" stroke="#b4b4b4" stroke-width="0.95" stroke-linejoin="round"/>
<path d="M345.29999999999995 36.5V39.6H348.4Z" fill="#e2e2e2" stroke="#b4b4b4" stroke-width="0.6649999999999999" stroke-linejoin="round"/>
<line x1="344.4" y1="41.2" x2="344.4" y2="47.8" stroke="#8a8a8a" stroke-width="0.9" stroke-linecap="butt"/>
<path d="M344.9 41.2L349.2 43.1L344.9 45Z" fill="#3a69b2" stroke="none" stroke-width="0.9" stroke-linejoin="round" stroke-linecap="round" />
<rect x="363.9" y="36.1" width="8.80" height="11.90" fill="#ffffff" stroke="#a8a8a8" stroke-width="0.9" rx="0.5" opacity="1"/>
<path d="M369.7 38.2H376.3L378.7 40.6V50.4H369.7Z" fill="#ffffff" stroke="#b4b4b4" stroke-width="0.95" stroke-linejoin="round"/>
<path d="M376.3 38.2V40.6H378.7Z" fill="#e2e2e2" stroke="#b4b4b4" stroke-width="0.6649999999999999" stroke-linejoin="round"/>
<rect x="367.7" y="40.0" width="4.60" height="1.90" fill="#f0a640" stroke="none" stroke-width="0.9" rx="0" opacity="1"/>
<path d="M372.6 40.8C374.6 40.8 375.2 41.8 375.2 43.6M373.9 43.2L375.2 45L376.5 43.2" fill="none" stroke="#4d4d4d" stroke-width="0.9" stroke-linejoin="round" stroke-linecap="round" />
<rect x="373.1" y="46.2" width="4.20" height="1.50" fill="#f0a640" stroke="none" stroke-width="0.9" rx="0" opacity="1"/>
<path d="M400.4 37.3H413.2Q414.1 37.3 414.1 38.2V45.9Q414.1 46.8 413.2 46.8H405.6L402.6 49.6V46.8H400.4Q399.5 46.8 399.5 45.9V38.2Q399.5 37.3 400.4 37.3Z" fill="#fbfbfb" stroke="#a4a4a4" stroke-width="0.9" stroke-linejoin="round" stroke-linecap="round" />
<path d="M402.3 35.4V41.6M399.1 38.5H405.5" fill="none" stroke="#4e4e4e" stroke-width="1.3" stroke-linejoin="round" stroke-linecap="round" stroke-linecap="butt"/>
<path d="M435.3 36.5H441.5L444.5 39.5V50.0H435.3Z" fill="#ffffff" stroke="#b4b4b4" stroke-width="0.95" stroke-linejoin="round"/>
<path d="M441.5 36.5V39.5H444.5Z" fill="#e2e2e2" stroke="#b4b4b4" stroke-width="0.6649999999999999" stroke-linejoin="round"/>
<rect x="436.4" y="38.2" width="4.30" height="1.60" fill="#f0a640" stroke="none" stroke-width="0.9" rx="0" opacity="1"/>
<path d="M456.2 36.5H463.3L466.3 39.5V50.0H456.2Z" fill="#ffffff" stroke="#b4b4b4" stroke-width="0.95" stroke-linejoin="round"/>
<path d="M463.3 36.5V39.5H466.3Z" fill="#e2e2e2" stroke="#b4b4b4" stroke-width="0.6649999999999999" stroke-linejoin="round"/>
<rect x="458.3" y="47.0" width="6.70" height="1.60" fill="#f0a640" stroke="none" stroke-width="0.9" rx="0" opacity="1"/>
<path d="M481.2 36.5H487.4L490.4 39.5V50.0H481.2Z" fill="#ffffff" stroke="#b4b4b4" stroke-width="0.95" stroke-linejoin="round"/>
<path d="M487.4 36.5V39.5H490.4Z" fill="#e2e2e2" stroke="#b4b4b4" stroke-width="0.6649999999999999" stroke-linejoin="round"/>
<path d="M485.6 44.2L485.0 47.5M487.2 44.2L486.6 47.5M484.5 45.3H487.8M484.3 46.5H487.5" fill="none" stroke="#3a69b2" stroke-width="0.6" stroke-linejoin="round" stroke-linecap="round" />
<rect x="511.9" y="36.8" width="14.40" height="12.30" fill="#f1f1f1" stroke="#bdbdbd" stroke-width="1.0" rx="1.3" opacity="1"/>
<rect x="513.3" y="38.3" width="11.60" height="9.30" fill="#fdfdfd" stroke="#d9d9d9" stroke-width="0.5" rx="0" opacity="1"/>
<path d="M514.3 42.9L515.6 39.6L516.9 42.9M514.8 41.9H516.4" fill="none" stroke="#5585cf" stroke-width="0.85" stroke-linejoin="round" stroke-linecap="round" />
<line x1="518.2" y1="40.0" x2="523.9" y2="40.0" stroke="#c9c9c9" stroke-width="0.7" stroke-linecap="butt"/>
<line x1="518.2" y1="41.8" x2="523.9" y2="41.8" stroke="#c9c9c9" stroke-width="0.7" stroke-linecap="butt"/>
<line x1="514.4" y1="44.2" x2="523.9" y2="44.2" stroke="#c9c9c9" stroke-width="0.7" stroke-linecap="butt"/>
<line x1="514.4" y1="46.0" x2="523.9" y2="46.0" stroke="#c9c9c9" stroke-width="0.7" stroke-linecap="butt"/>
<rect x="535.0" y="36.8" width="10.00" height="12.30" fill="#fafafa" stroke="#b8b8b8" stroke-width="1.0" rx="0.7" opacity="1"/>
<rect x="535.9" y="37.9" width="8.20" height="1.80" fill="#f3bb62" stroke="none" stroke-width="0.9" rx="0" opacity="1"/>
<rect x="536.4" y="40.9" width="2.20" height="4.20" fill="#8c8c8c" stroke="none" stroke-width="0.9" rx="0" opacity="1"/>
<rect x="539.6" y="40.9" width="3.80" height="4.20" fill="#d8d8d8" stroke="none" stroke-width="0.9" rx="0" opacity="1"/>
<rect x="535.9" y="46.2" width="8.20" height="1.90" fill="#3363b0" stroke="none" stroke-width="0.9" rx="0" opacity="1"/>
<path d="M557.4 45.6C560 44.6 563.4 40.6 565.6 37.6L565.4 48.2M559.8 43.9C561.6 43.5 563.6 43.6 565.4 44.0" fill="none" stroke="#3f6fbd" stroke-width="1.7" stroke-linejoin="round" stroke-linecap="round" />
<rect x="585.8" y="36.0" width="5.80" height="7.60" fill="#e0e0e0" stroke="none" stroke-width="0.9" rx="0" opacity="1"/>
<rect x="578.8" y="43.4" width="12.80" height="6.30" fill="#e0e0e0" stroke="none" stroke-width="0.9" rx="0" opacity="1"/>
<path d="M579.2 42.4L582.0 36.6L584.8 42.4M580.2 40.4H583.8" fill="none" stroke="#3566b3" stroke-width="1.2" stroke-linejoin="round" stroke-linecap="round" />
<rect x="597.6" y="35.7" width="6.20" height="6.30" fill="#ffffff" stroke="#9c9c9c" stroke-width="0.8" rx="0.4" opacity="1"/>
<path d="M599.8 41.2L604.2 37.2" fill="none" stroke="#3a69b2" stroke-width="1.2" stroke-linejoin="round" stroke-linecap="round" />
<rect x="597.4" y="47.2" width="7.00" height="6.40" fill="#ffffff" stroke="#9c9c9c" stroke-width="0.7" rx="0.4" opacity="1"/>
<rect x="597.4" y="46.9" width="7.00" height="1.30" fill="#4a4a4a" stroke="none" stroke-width="0.9" rx="0" opacity="1"/>
<rect x="598.4" y="50.0" width="2.50" height="1.60" fill="#f0a640" stroke="none" stroke-width="0.9" rx="0" opacity="1"/>
<circle cx="603.2" cy="52.6" r="1.8" fill="#eef3fb" stroke="#5d8bd0" stroke-width="0.7"/>
<path d="M598.0 58.8H602.2L604.4 61V65.8H598.0Z" fill="#ffffff" stroke="#9c9c9c" stroke-width="0.8" stroke-linejoin="round" stroke-linecap="round" />
<rect x="597.6" y="61.0" width="3.20" height="3.60" fill="#e8eef8" stroke="#4d7dc6" stroke-width="0.8" rx="0" opacity="1"/>
<path d="M759.0 76.0L761.35 73.9L763.7 76.0" fill="none" stroke="#505050" stroke-width="0.9" stroke-linejoin="round" stroke-linecap="round" />
<path d="M762.65 83.65H765.9499999999999L764.3 81.65Z" fill="#404040" opacity="1"/>
<path d="M762.4499999999999 392.3H765.85L764.15 394.3Z" fill="#404040" opacity="1"/>
<path d="M70.9 400.4H74.1V405.4H70.9ZM74.9 400.4H77.9V405.4H74.9Z" fill="none" stroke="#777" stroke-width="0.7" stroke-linejoin="round" stroke-linecap="round" />
<path d="M75.6 403L76.4 403.8L77.6 402.2" fill="none" stroke="#777" stroke-width="0.5" stroke-linejoin="round" stroke-linecap="round" />
<path d="M625.9 400.8L629.1 401.4V405.4L625.9 404.8ZM632.3 400.8L629.1 401.4V405.4L632.3 404.8Z" fill="#e4e4e4" stroke="#8a8a8a" stroke-width="0.6" stroke-linejoin="round" stroke-linecap="round" />
<rect x="645.8" y="400.6" width="7.20" height="4.80" fill="#c4c4c4" stroke="#8a8a8a" stroke-width="0.6" rx="0" opacity="1"/>
<line x1="647.0" y1="402.2" x2="651.8" y2="402.2" stroke="#8a8a8a" stroke-width="0.5" stroke-linecap="butt"/>
<line x1="647.0" y1="403.8" x2="651.8" y2="403.8" stroke="#8a8a8a" stroke-width="0.5" stroke-linecap="butt"/>
<rect x="666.8" y="400.6" width="5.60" height="4.40" fill="#e9e9e9" stroke="#8a8a8a" stroke-width="0.6" rx="0" opacity="1"/>
<circle cx="672.2" cy="404.6" r="1.2" fill="#f3f3f3" stroke="#777" stroke-width="0.5"/>
</svg>
</body></html>
